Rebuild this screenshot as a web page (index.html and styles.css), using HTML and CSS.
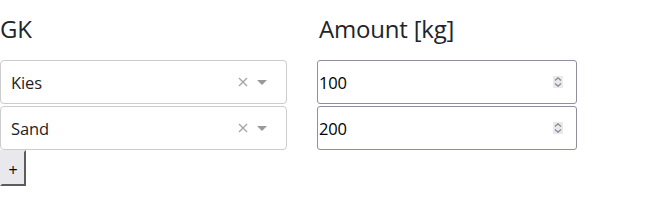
FILE: index.html
```html
<!DOCTYPE html>
<html lang="en">
<head>
    <meta charset="UTF-8">
    <title>Mix</title>
    <link rel="stylesheet" href="styles.css">
</head>
<body>
    <div class="mix">
        <div class="col col-gk">
            <h2 class="label">GK</h2>
            <div class="select">
                <span class="select-value">Kies</span>
                <span class="select-clear"><svg width="10" height="10" viewBox="0 0 10 10"><path d="M1 1L9 9M9 1L1 9" stroke="#a3a3a3" stroke-width="1.3"/></svg></span>
                <span class="select-arrow"></span>
            </div>
            <div class="select">
                <span class="select-value">Sand</span>
                <span class="select-clear"><svg width="10" height="10" viewBox="0 0 10 10"><path d="M1 1L9 9M9 1L1 9" stroke="#a3a3a3" stroke-width="1.3"/></svg></span>
                <span class="select-arrow"></span>
            </div>
            <button class="add-button">+</button>
        </div>
        <div class="col col-amount">
            <h2 class="label">Amount [kg]</h2>
            <div class="number">
                <input type="text" value="100">
                <span class="spin"><svg width="10" height="12" viewBox="0 0 10 12"><path d="M2 4.5L5 1.8L8 4.5M2 7.5L5 10.2L8 7.5" fill="none" stroke="#85858c" stroke-width="1.2"/></svg></span>
            </div>
            <div class="number">
                <input type="text" value="200">
                <span class="spin"><svg width="10" height="12" viewBox="0 0 10 12"><path d="M2 4.5L5 1.8L8 4.5M2 7.5L5 10.2L8 7.5" fill="none" stroke="#85858c" stroke-width="1.2"/></svg></span>
            </div>
        </div>
    </div>
</body>
</html>
```

FILE: styles.css
```css
body {
    margin: 0;
    font-family: "Open Sans", "Noto Sans", sans-serif;
    color: #212529;
    background: #fff;
}
.mix {
    display: flex;
    gap: 30px;
    padding-top: 12px;
}
.col {
    display: flex;
    flex-direction: column;
    gap: 2px;
}
.col-gk {
    width: 287px;
}
.col-amount {
    width: 260px;
}
.label {
    margin: 0 0 12px 0;
    font-size: 24px;
    font-weight: 400;
    line-height: 34px;
    letter-spacing: -0.2px;
}
.col-amount .label {
    padding-left: 2px;
}
.select {
    display: flex;
    align-items: center;
    height: 44px;
    box-sizing: border-box;
    border: 1px solid #ccc;
    border-radius: 4px;
    padding: 0 19px 0 10px;
}
.select-value {
    flex-grow: 1;
    font-size: 16.5px;
    letter-spacing: -0.1px;
    color: #1e2226;
}
.select-clear {
    display: flex;
    margin-right: 9px;
}
.select-arrow {
    width: 0;
    height: 0;
    border-left: 5px solid transparent;
    border-right: 5px solid transparent;
    border-top: 5px solid #999;
}
.number {
    display: flex;
    align-items: center;
    height: 44px;
    box-sizing: border-box;
    border: 1px solid #8f8f9d;
    border-radius: 3px;
    padding: 0 13px 0 1px;
}
.number input {
    flex-grow: 1;
    min-width: 0;
    border: none;
    outline: none;
    padding: 0;
    font-family: "Open Sans", "Noto Sans", sans-serif;
    font-size: 16.5px;
    letter-spacing: -0.2px;
    color: #000;
    background: transparent;
}
.spin {
    display: flex;
    align-items: center;
    justify-content: center;
    width: 10px;
    height: 12px;
    background: #e9e9ed;
}
.add-button {
    align-self: flex-start;
    width: 26px;
    height: 36px;
    margin-top: -2px;
    padding: 0;
    border: 2px outset #b0b0b0;
    border-top-color: #e9e9ed;
    border-left-color: #e9e9ed;
    background: #e9e9ed;
    font-family: "Open Sans", sans-serif;
    font-size: 16px;
    line-height: 36px;
    color: #000;
}
```
